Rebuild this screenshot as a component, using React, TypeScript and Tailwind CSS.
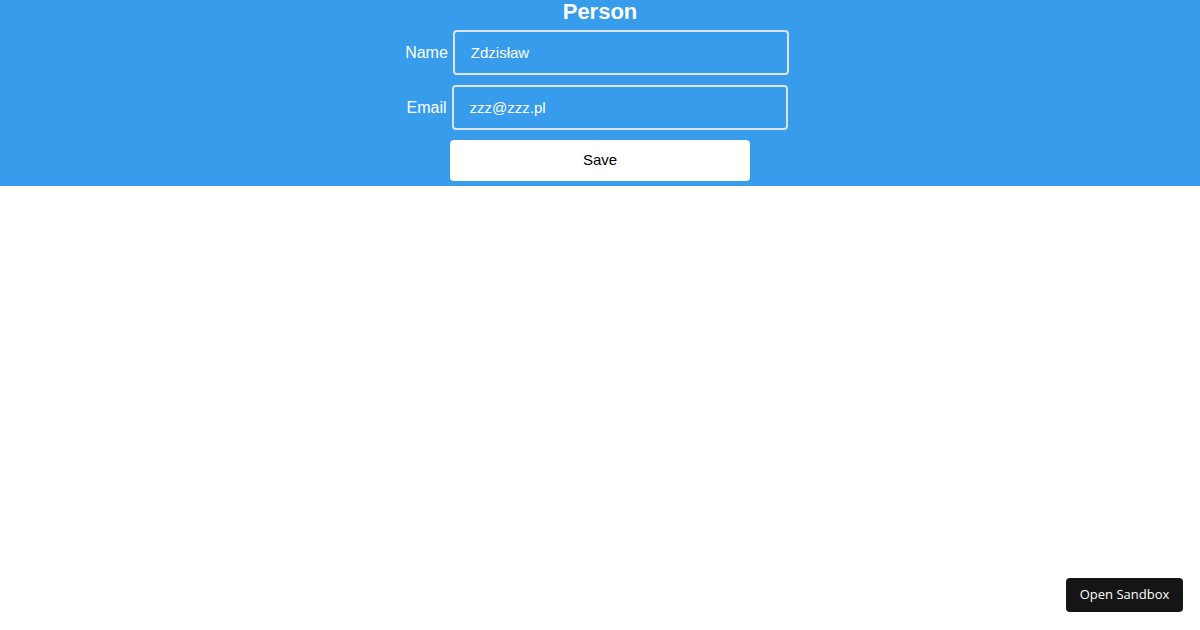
export default function App() {
  return (
    <div className="min-h-screen bg-white font-['Liberation_Sans',Arial,sans-serif]">
      <div className="bg-[#369ceb] pb-[5px] flex flex-col items-center">
        <h1 className="text-[22px] leading-[24px] font-bold text-white">Person</h1>
        <div className="mt-[6px] mr-[6px] flex items-center gap-[5px]">
          <label className="text-white text-[16px]">Name</label>
          <input
            defaultValue="Zdzisław"
            className="w-[336px] h-[45px] px-4 bg-transparent border-2 border-[#dfe3e8] rounded-[4px] text-white text-[15px] outline-none"
          />
        </div>
        <div className="mt-[10px] mr-[6px] flex items-center gap-[5px]">
          <label className="text-white text-[16px]">Email</label>
          <input
            defaultValue="zzz@zzz.pl"
            className="w-[336px] h-[45px] px-4 bg-transparent border-2 border-[#dfe3e8] rounded-[4px] text-white text-[15px] outline-none"
          />
        </div>
        <button className="mt-[10px] w-[300px] h-[41px] bg-white rounded-[4px] text-black text-[15px]">
          Save
        </button>
      </div>
      <button className="fixed right-[17px] bottom-[18px] h-[34px] w-[117px] bg-[#151515] rounded-[4px] text-white text-[13px] font-medium font-['Open_Sans',sans-serif]">
        Open Sandbox
      </button>
    </div>
  );
}
